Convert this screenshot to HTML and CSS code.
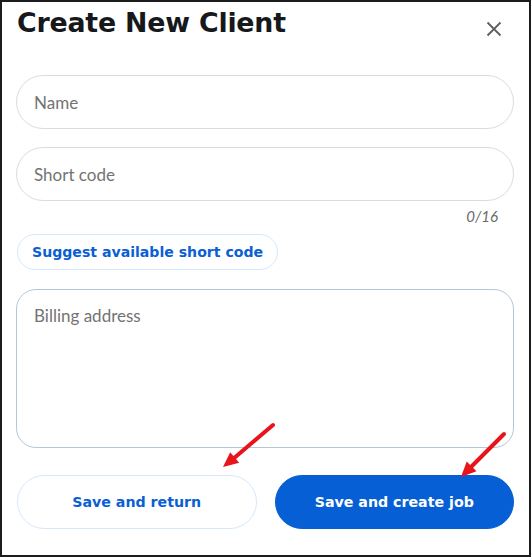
FILE: index.html
```html
<!DOCTYPE html>
<html>
<head>
<meta charset="utf-8">
<link rel="stylesheet" href="styles.css">
</head>
<body>
<div class="dialog">
  <div class="header">
    <h1 class="title">Create New Client</h1>
    <button class="close" aria-label="Close">
      <svg width="16" height="16" viewBox="0 0 16 16"><path d="M1.5 1.5 L14.5 14.5 M14.5 1.5 L1.5 14.5" stroke="#5f5f5f" stroke-width="1.8" fill="none"/></svg>
    </button>
  </div>
  <div class="field name-field"><span class="placeholder">Name</span></div>
  <div class="field code-field"><span class="placeholder">Short code</span></div>
  <div class="counter">0/16</div>
  <button class="suggest">Suggest available short code</button>
  <div class="textarea"><span class="placeholder">Billing address</span></div>
  <div class="actions">
    <button class="btn btn-outline">Save and return</button>
    <button class="btn btn-primary">Save and create job</button>
  </div>
  <svg class="arrows" width="531" height="557" viewBox="0 0 531 557">
    <g stroke="#e8141b" stroke-width="4" stroke-linecap="round" fill="none">
      <path d="M273 425 L233 459"/>
      <path d="M504 434 L470 468"/>
    </g>
    <g fill="#e8141b">
      <path d="M223 467 L230.2 452.2 L239.2 462.8 Z"/>
      <path d="M461 477 L466.7 461.5 L476.5 471.3 Z"/>
    </g>
  </svg>
</div>
</body>
</html>
```

FILE: styles.css
```css
* { box-sizing: border-box; }
html, body { margin: 0; padding: 0; background: #ffffff; }
.dialog {
  position: relative;
  width: 531px;
  height: 557px;
  border: 2px solid #1c1c1c;
  padding: 0 15px 0 14px;
  font-family: Lato, "Open Sans", sans-serif;
  overflow: hidden;
}
.header {
  display: flex;
  justify-content: space-between;
  align-items: flex-start;
  height: 73px;
}
.title {
  margin: 4px 0 0 1px;
  font-family: "DejaVu Sans", sans-serif;
  font-weight: bold;
  font-size: 26.8px;
  line-height: 34px;
  color: #16181b;
  letter-spacing: -0.2px;
}
.close {
  margin: 19px 12px 0 0;
  padding: 0;
  border: none;
  background: none;
  width: 16px;
  height: 16px;
  display: flex;
}
.field {
  height: 54px;
  border: 1px solid #dcdcdc;
  border-radius: 27px;
  display: flex;
  align-items: center;
  padding-left: 17px;
}
.placeholder {
  font-family: Lato, sans-serif;
  font-size: 17px;
  color: #737373;
}
.code-field { margin-top: 18px; }
.counter {
  text-align: right;
  padding-right: 16px;
  margin-top: 5px;
  height: 20px;
  font-style: italic;
  font-size: 15px;
  color: #6a6a6a;
  line-height: 20px;
}
.suggest {
  margin-top: 8px;
  margin-left: 1px;
  height: 36px;
  padding: 0 14px;
  border: 1px solid #d6e8fb;
  border-radius: 18px;
  background: #fff;
  font-family: "DejaVu Sans", sans-serif;
  font-weight: bold;
  font-size: 14.1px;
  color: #0a5fd3;
  display: block;
}
.textarea {
  margin-top: 19px;
  height: 159px;
  border: 1px solid #b3c6dc;
  border-radius: 20px;
  padding: 15px 17px;
}
.actions {
  margin-top: 27px;
  display: flex;
  gap: 18px;
  padding-left: 1px;
}
.btn {
  flex: 1;
  height: 54px;
  border-radius: 27px;
  font-family: "DejaVu Sans", sans-serif;
  font-weight: bold;
  font-size: 14.2px;
}
.btn-outline {
  background: #fff;
  border: 1px solid #d6e8fb;
  color: #0a5fd3;
}
.btn-primary {
  background: #075fd6;
  border: 1px solid #075fd6;
  color: #fff;
}
.arrows {
  position: absolute;
  left: -2px;
  top: -2px;
  pointer-events: none;
}
```
